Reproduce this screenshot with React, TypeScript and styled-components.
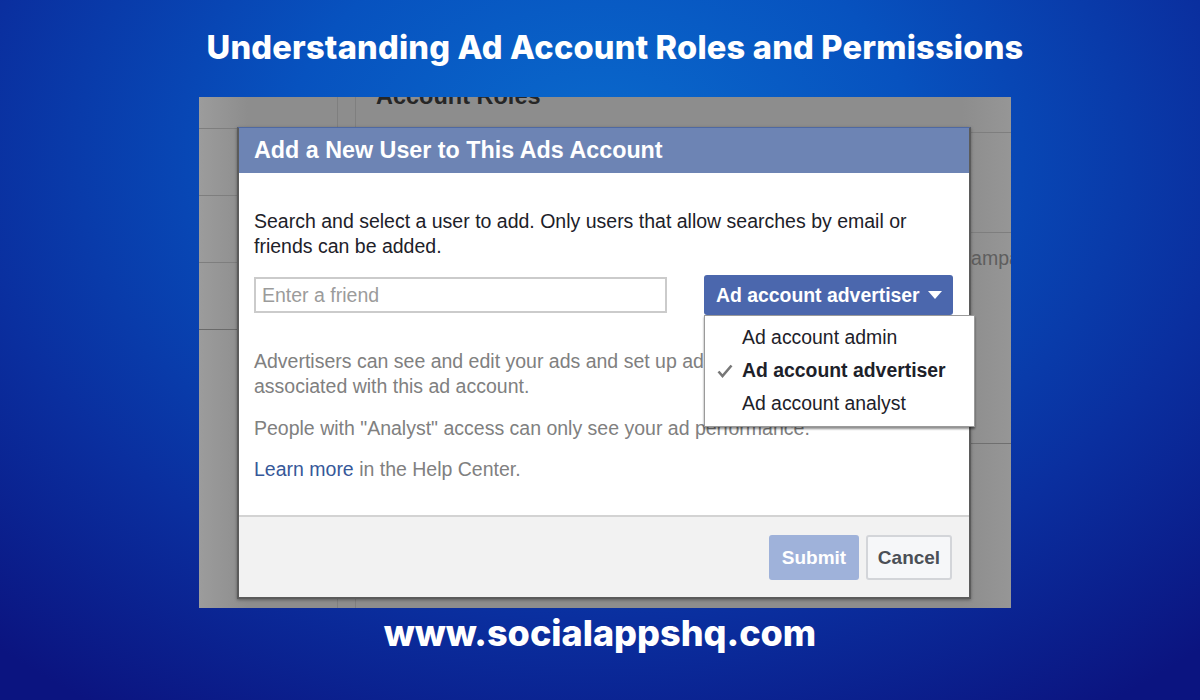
import React from "react";
import styled, { createGlobalStyle } from "styled-components";

const GlobalStyle = createGlobalStyle`
  html, body {
    margin: 0;
    padding: 0;
  }
  body {
    font-family: "Liberation Sans", Arial, sans-serif;
  }
`;

const Page = styled.div`
  width: 1200px;
  height: 700px;
  overflow: hidden;
  display: flex;
  flex-direction: column;
  align-items: center;
  background: radial-gradient(
    ellipse 75% 95% at 50% 22%,
    #0a6bcd 0%,
    #0752bf 35%,
    #0a2f9f 70%,
    #0b1480 100%
  );
`;

const Headline = styled.h1`
  margin: 28px 0 0 30px;
  font-family: Inter, "Open Sans", sans-serif;
  font-weight: 800;
  font-size: 32.6px;
  line-height: 38px;
  color: #ffffff;
  letter-spacing: 0.2px;
`;

const Frame = styled.div`
  position: relative;
  margin: 31px 0 0 10px;
  width: 812px;
  height: 511px;
  overflow: hidden;
  background: linear-gradient(90deg, #9c9c9c 0%, #8d8d8d 6%, #8d8d8d 94%, #969696 100%);
`;

/* faded page behind the dialog */
const BackPage = styled.div`
  display: grid;
  grid-template-columns: 139px 1fr;
  column-gap: 17px;
  height: 100%;
`;

const Sidebar = styled.div`
  border-right: 1px solid #7f7f7f;
  display: flex;
  flex-direction: column;
`;

const SideRow = styled.div<{ $h: number; $dark?: boolean }>`
  height: ${(p) => p.$h}px;
  flex-shrink: 0;
  border-bottom: 1px solid ${(p) => (p.$dark ? "#6a6a6a" : "#7e7e7e")};
`;

const Main = styled.div`
  border-left: 1px solid #7f7f7f;
  display: flex;
  flex-direction: column;
`;

const MainHead = styled.div`
  height: 35px;
  padding-left: 20px;
  border-bottom: 1px solid #7e7e7e;
  overflow: hidden;
`;

const RolesTitle = styled.h2`
  margin: -14px 0 0;
  font-size: 23.5px;
  line-height: 26px;
  font-weight: 700;
  color: #262626;
`;

const MainRow = styled.div<{ $h: number; $dark?: boolean }>`
  height: ${(p) => p.$h}px;
  flex-shrink: 0;
  display: flex;
  justify-content: flex-end;
  border-bottom: 1px solid ${(p) => (p.$dark ? "#6f6f6f" : "#7e7e7e")};
`;

const CutCell = styled.div`
  width: 54px;
  padding-top: 14px;
  overflow: hidden;
  white-space: nowrap;
  font-size: 19.5px;
  line-height: 22px;
  color: #5e5e5e;
`;

/* dialog */
const Dialog = styled.div`
  position: absolute;
  left: 38px;
  top: 30px;
  width: 730px;
  background: #ffffff;
  border: 2px solid #5b5b5b;
  border-top: 1px solid #4f69a2;
  box-shadow: 0 1px 3px rgba(0, 0, 0, 0.35);
`;

const DialogHead = styled.div`
  height: 45px;
  background: #6d84b4;
  display: flex;
  align-items: center;
  padding-left: 15px;
  color: #ffffff;
  font-weight: 700;
  font-size: 23.3px;
`;

const DialogBody = styled.div`
  padding: 36px 16px 33px 15px;
  color: #1f1f1f;
`;

const Para = styled.p<{ $muted?: boolean; $gap?: number }>`
  margin: ${(p) => p.$gap ?? 0}px 0 0;
  font-size: 19.5px;
  line-height: 25px;
  white-space: nowrap;
  color: ${(p) => (p.$muted ? "#808080" : "#1d2129")};
`;

const PickRow = styled.div`
  margin-top: 16px;
  display: flex;
  align-items: center;
  justify-content: space-between;
`;

const FriendInput = styled.div`
  width: 413px;
  height: 36px;
  box-sizing: border-box;
  border: 2px solid #cbcbcb;
  display: flex;
  align-items: center;
  padding-left: 6px;
  font-size: 19.5px;
  color: #9b9b9b;
`;

const RoleSelect = styled.div`
  position: relative;
`;

const RoleButton = styled.div`
  width: 249px;
  height: 40px;
  box-sizing: border-box;
  border-radius: 3px;
  background: #4b67ad;
  color: #ffffff;
  font-weight: 700;
  font-size: 19.4px;
  display: flex;
  align-items: center;
  gap: 8px;
  padding-left: 12px;
`;

const Menu = styled.div`
  position: absolute;
  left: 0;
  top: 40px;
  width: 269px;
  padding: 5px 0 6px;
  background: #ffffff;
  border: 1px solid #9a9a9a;
  box-shadow: 0 2px 2px rgba(0, 0, 0, 0.45);
  z-index: 2;
`;

const MenuItem = styled.div<{ $active?: boolean }>`
  height: 33px;
  display: flex;
  align-items: center;
  font-size: 19.4px;
  font-weight: ${(p) => (p.$active ? 700 : 400)};
  color: #1d2129;
`;

const CheckSlot = styled.span`
  width: 37px;
  flex-shrink: 0;
  display: flex;
  justify-content: flex-end;
  padding-right: 9px;
  box-sizing: border-box;
`;

const LinkText = styled.span`
  color: #365899;
`;

const DialogFoot = styled.div`
  height: 62px;
  padding: 18px 17px 0 0;
  background: #f2f2f2;
  border-top: 2px solid #d3d3d3;
  display: flex;
  justify-content: flex-end;
  gap: 7px;
`;

const FootButton = styled.div<{ $primary?: boolean; $w: number }>`
  width: ${(p) => p.$w}px;
  height: 45px;
  box-sizing: border-box;
  border-radius: 3px;
  display: flex;
  align-items: center;
  justify-content: center;
  font-weight: 700;
  font-size: 19px;
  background: ${(p) => (p.$primary ? "#9fb2da" : "#f6f7f9")};
  color: ${(p) => (p.$primary ? "#ffffff" : "#4b4f56")};
  border: 2px solid ${(p) => (p.$primary ? "#9fb2da" : "#d3d5d9")};
`;

const SiteUrl = styled.div`
  margin-top: 4px;
  font-family: Inter, "Open Sans", sans-serif;
  font-weight: 800;
  font-size: 36px;
  line-height: 42px;
  color: #ffffff;
`;

const Caret = () => (
  <svg width="14" height="9" viewBox="0 0 14 9">
    <path d="M0 0 L14 0 L7 8 Z" fill="#ffffff" />
  </svg>
);

const Check = () => (
  <svg width="16" height="14" viewBox="0 0 16 14">
    <path d="M1.5 7.5 L5.5 12 L14.5 1.5" fill="none" stroke="#777" strokeWidth="2.6" />
  </svg>
);

const roles = ["Ad account admin", "Ad account advertiser", "Ad account analyst"];

export default function App() {
  const selected = "Ad account advertiser";
  return (
    <Page>
      <GlobalStyle />
      <Headline>Understanding Ad Account Roles and Permissions</Headline>
      <Frame>
        <BackPage>
          <Sidebar>
            <SideRow $h={31} />
            <SideRow $h={66} />
            <SideRow $h={66} />
            <SideRow $h={66} $dark />
          </Sidebar>
          <Main>
            <MainHead>
              <RolesTitle>Account Roles</RolesTitle>
            </MainHead>
            <MainRow $h={99} />
            <MainRow $h={210} $dark>
              <CutCell>Campaigns</CutCell>
            </MainRow>
          </Main>
        </BackPage>

        <Dialog>
          <DialogHead>Add a New User to This Ads Account</DialogHead>
          <DialogBody>
            <Para>
              Search and select a user to add. Only users that allow searches by email or
              <br />
              friends can be added.
            </Para>
            <PickRow>
              <FriendInput>Enter a friend</FriendInput>
              <RoleSelect>
                <RoleButton>
                  {selected}
                  <Caret />
                </RoleButton>
                <Menu>
                  {roles.map((r) => (
                    <MenuItem key={r} $active={r === selected}>
                      <CheckSlot>{r === selected && <Check />}</CheckSlot>
                      <span>{r}</span>
                    </MenuItem>
                  ))}
                </Menu>
              </RoleSelect>
            </PickRow>
            <Para $muted $gap={34}>
              Advertisers can see and edit your ads and set up ads for campaigns
              <br />
              associated with this ad account.
            </Para>
            <Para $muted $gap={17}>
              People with "Analyst" access can only see your ad performance.
            </Para>
            <Para $muted $gap={16}>
              <LinkText>Learn more</LinkText> in the Help Center.
            </Para>
          </DialogBody>
          <DialogFoot>
            <FootButton $primary $w={90}>
              Submit
            </FootButton>
            <FootButton $w={86}>Cancel</FootButton>
          </DialogFoot>
        </Dialog>
      </Frame>
      <SiteUrl>www.socialappshq.com</SiteUrl>
    </Page>
  );
}
